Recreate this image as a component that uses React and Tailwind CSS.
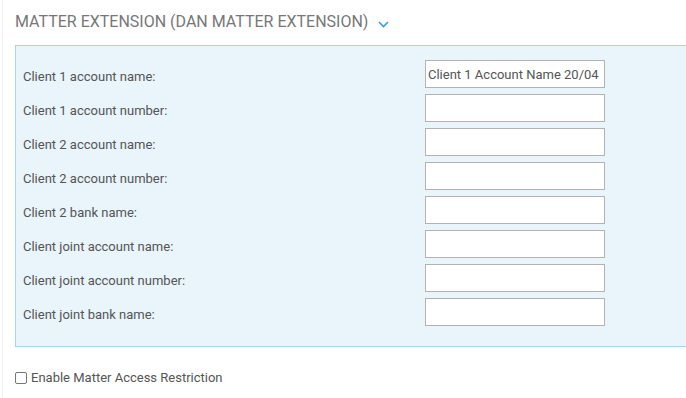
import React from 'react'

const fields = [
  { label: 'Client 1 account name:', value: 'Client 1 Account Name 20/04' },
  { label: 'Client 1 account number:', value: '' },
  { label: 'Client 2 account name:', value: '' },
  { label: 'Client 2 account number:', value: '' },
  { label: 'Client 2 bank name:', value: '' },
  { label: 'Client joint account name:', value: '' },
  { label: 'Client joint account number:', value: '' },
  { label: 'Client joint bank name:', value: '' },
]

export default function App() {
  return (
    <div className="h-[398px] w-[686px] overflow-hidden bg-white font-['Roboto',sans-serif]">
      <div className="ml-[2px] h-full border-l border-[#f0f0f0] pl-[12px]">
        {/* section header */}
        <div className="flex items-center gap-[10px] pt-[11px] pb-[12px]">
          <h2 className="text-[16px] leading-[22px] text-[#777] uppercase">Matter Extension (Dan Matter Extension)</h2>
          <svg width="11" height="7" viewBox="0 0 11 7" className="mt-[4px]">
            <path d="M1 1l4.5 4.5L10 1" fill="none" stroke="#3d9be0" strokeWidth="1.6" />
          </svg>
        </div>

        <div className="border-t border-b border-l border-[#a8d4f2] bg-[#e9f4fb] pt-[14px] pb-[20px] pl-[7px]">
          <div className="flex flex-col gap-[6px]">
            {fields.map((f) => (
              <div key={f.label} className="flex items-center">
                <label className="w-[402px] pt-[5px] text-[13px] text-[#555]">{f.label}</label>
                <input
                  type="text"
                  defaultValue={f.value}
                  className="h-[28px] w-[180px] border border-[#b3b3b3] bg-white px-[2px] text-[13px] text-[#555] outline-none"
                />
              </div>
            ))}
          </div>
        </div>

        <label className="mt-[21px] flex items-center gap-[4px] text-[13px] text-[#555]">
          <span className="h-[12px] w-[12px] rounded-[2px] border border-[#767676] bg-white" />
          Enable Matter Access Restriction
        </label>
      </div>
    </div>
  )
}
